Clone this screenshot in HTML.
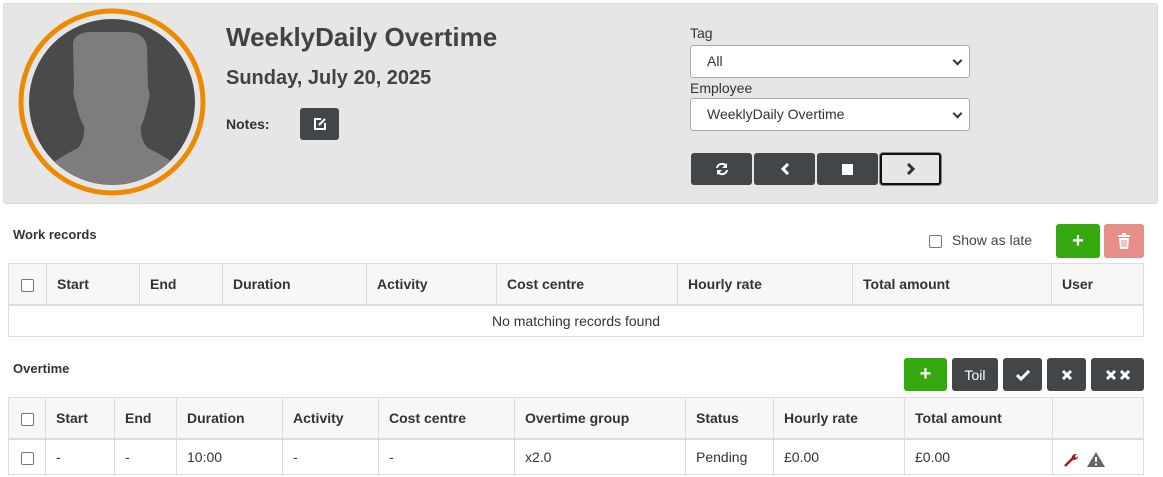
<!DOCTYPE html>
<html><head><style>
*{box-sizing:border-box}
body{margin:0;width:1163px;height:477px;background:#fff;font-family:"Liberation Sans",Arial,sans-serif;font-size:14px;color:#333;overflow:hidden;position:relative}
.abs{position:absolute}
.panel{left:3px;top:3px;width:1155px;height:201px;background:#e6e6e6;border:1px solid #d9d9d9;border-radius:3px}
.btn{position:absolute;background:#434649;border-radius:3px;color:#fff;display:flex;align-items:center;justify-content:center;font-weight:bold}
.sel{position:absolute;left:690px;width:280px;height:33px;background:#fff;border:1px solid #aaa;border-radius:3px;padding-left:16px;line-height:31px;font-size:14px}
.sel:after{content:"";position:absolute;right:8px;top:11px;width:5px;height:5px;border-right:2px solid #333;border-bottom:2px solid #333;transform:rotate(45deg)}
table{position:absolute;border-collapse:collapse;font-size:14px}
td,th{border:1px solid #ddd;text-align:left;padding:0 10px;}
th{background:#f7f7f7;font-weight:bold;height:41px;border-bottom:2px solid #ddd}
.cb{width:13px;height:13px;border:1px solid #767676;border-radius:2px;display:inline-block;background:#fff;vertical-align:middle}
</style></head><body>
<div class="abs panel"></div>
<svg class="abs" style="left:18px;top:8px" width="190" height="190" viewBox="0 0 190 190">
<circle cx="94" cy="94" r="91" fill="#e6e6e6" stroke="#ee8a00" stroke-width="5"/>
<circle cx="94" cy="94" r="83" fill="#4a4a4a"/>
<clipPath id="c"><circle cx="94" cy="94" r="83"/></clipPath>
<path clip-path="url(#c)" fill="#7d7d7d" d="M55 38 Q54 26 70 24 L112 24 Q128 26 129 40 L130 80 Q133 86 130 95 Q127 110 123 118 Q122 132 130 140 Q150 150 170 165 L180 200 L10 200 L20 165 Q40 150 60 140 Q67 132 66 118 Q60 108 58 95 Q54 86 56 80 Z"/>
</svg>
<div class="abs" style="left:226px;top:22px;font-size:26px;font-weight:bold;color:#404346">WeeklyDaily Overtime</div>
<div class="abs" style="left:226px;top:67px;font-size:20px;font-weight:bold;color:#404346">Sunday, July 20, 2025</div>
<div class="abs" style="left:226px;top:116px;font-size:14px;font-weight:bold">Notes:</div>
<div class="btn" style="left:300px;top:108px;width:39px;height:32px"><svg width="14" height="14" viewBox="0 0 14 14"><path d="M8 2H2v10h10V6" fill="none" stroke="#fff" stroke-width="2"/><path d="M6 8l6-6" stroke="#fff" stroke-width="2.2"/></svg></div>
<div class="abs" style="left:690px;top:25px">Tag</div>
<div class="sel" style="top:45px">All</div>
<div class="abs" style="left:690px;top:80px">Employee</div>
<div class="sel" style="top:98px">WeeklyDaily Overtime</div>
<div class="btn" style="left:691px;top:153px;width:61px;height:32px"><svg width="14" height="14" viewBox="0 0 14 14"><path d="M2 6A5 5 0 0 1 11 4M12 8A5 5 0 0 1 3 10" fill="none" stroke="#fff" stroke-width="2"/><path d="M12 1v5H7zM2 13V8h5z" fill="#fff"/></svg></div>
<div class="btn" style="left:754px;top:153px;width:61px;height:32px"><svg width="10" height="12"><path d="M8 1L3 6l5 5" fill="none" stroke="#fff" stroke-width="3"/></svg></div>
<div class="btn" style="left:817px;top:153px;width:61px;height:32px"><div style="width:11px;height:11px;background:#fff"></div></div>
<div class="btn" style="left:880px;top:153px;width:61px;height:32px;background:#e6e6e6;border:2px solid #111;box-shadow:0 0 0 1px #888"><svg width="10" height="12"><path d="M2 1l5 5-5 5" fill="none" stroke="#333" stroke-width="3"/></svg></div>

<div class="abs" style="left:13px;top:227px;font-weight:bold;font-size:13px">Work records</div>
<div class="abs" style="left:929px;top:232px"><span class="cb"></span> <span style="margin-left:6px;color:#444">Show as late</span></div>
<div class="btn" style="left:1056px;top:224px;width:44px;height:34px;background:#35a90f;font-size:20px">+</div>
<div class="btn" style="left:1104px;top:224px;width:40px;height:34px;background:#e68e8a"><svg width="14" height="16" viewBox="0 0 14 16"><rect x="1" y="2" width="12" height="2" fill="#fff"/><rect x="5" y="0" width="4" height="2" fill="#fff"/><path d="M2 5h10l-1 11H3z" fill="#fff"/><path d="M5 7v7M7 7v7M9 7v7" stroke="#e68e8a"/></svg></div>
<table style="left:8px;top:263px;width:1136px">
<tr><th style="width:38px;padding-left:12px"><span class="cb"></span></th><th style="width:93px">Start</th><th style="width:83px">End</th><th style="width:144px">Duration</th><th style="width:130px">Activity</th><th style="width:181px">Cost centre</th><th style="width:175px">Hourly rate</th><th style="width:199px">Total amount</th><th>User</th></tr>
<tr><td colspan="9" style="text-align:center;height:32px">No matching records found</td></tr>
</table>

<div class="abs" style="left:13px;top:361px;font-weight:bold;font-size:13px">Overtime</div>
<div class="btn" style="left:904px;top:358px;width:43px;height:33px;background:#35a90f;font-size:20px">+</div>
<div class="btn" style="left:952px;top:358px;width:46px;height:33px;font-weight:normal">Toil</div>
<div class="btn" style="left:1003px;top:358px;width:39px;height:33px"><svg width="14" height="12"><path d="M1 6l4 4 8-8" fill="none" stroke="#fff" stroke-width="3"/></svg></div>
<div class="btn" style="left:1047px;top:358px;width:39px;height:33px"><svg width="12" height="12"><path d="M2 2l8 8M10 2l-8 8" stroke="#fff" stroke-width="3"/></svg></div>
<div class="btn" style="left:1091px;top:358px;width:53px;height:33px"><svg width="26" height="12"><path d="M2 2l8 8M10 2l-8 8M16 2l8 8M24 2l-8 8" stroke="#fff" stroke-width="3"/></svg></div>
<table style="left:8px;top:397px;width:1136px">
<tr><th style="width:37px;padding-left:12px"><span class="cb"></span></th><th style="width:69px">Start</th><th style="width:62px">End</th><th style="width:106px">Duration</th><th style="width:96px">Activity</th><th style="width:136px">Cost centre</th><th style="width:171px">Overtime group</th><th style="width:88px">Status</th><th style="width:131px">Hourly rate</th><th style="width:148px">Total amount</th><th></th></tr>
<tr style="height:36px"><td style="padding-left:12px"><span class="cb"></span></td><td>-</td><td>-</td><td>10:00</td><td>-</td><td>-</td><td>x2.0</td><td>Pending</td><td>£0.00</td><td>£0.00</td><td style="padding-top:8px"><svg width="16" height="14" viewBox="0 0 16 14"><path d="M2 13L10 5" stroke="#a11f1f" stroke-width="2.6"/><path d="M9 6Q8 2 12 1L14 1 12 3 13 5 15 3Q15 7 10 7Z" fill="#a11f1f"/></svg> <svg width="18" height="15" viewBox="0 0 18 15" style="margin-left:4px"><path d="M9 0L18 15H0z" fill="#666"/><path d="M9 5v5M9 11.5v2" stroke="#fff" stroke-width="2"/></svg></td></tr>
</table>
</body></html>
